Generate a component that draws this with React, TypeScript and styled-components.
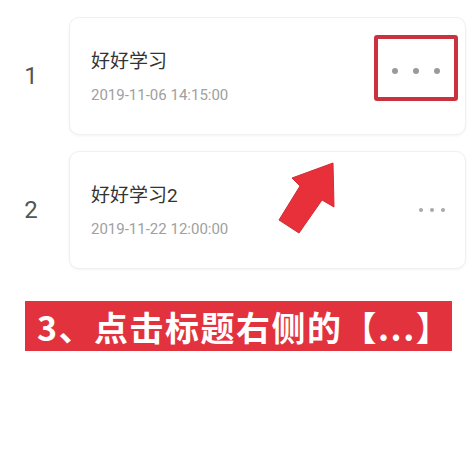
import styled, { createGlobalStyle } from 'styled-components';

const GlobalStyle = createGlobalStyle`
  html, body {
    margin: 0;
    padding: 0;
    background: #ffffff;
  }
  body {
    font-family: Roboto, "Noto Sans CJK SC", sans-serif;
  }
`;

type Note = {
  title: string;
  time: string;
};

const notes: Note[] = [
  { title: '好好学习', time: '2019-11-06 14:15:00' },
  { title: '好好学习2', time: '2019-11-22 12:00:00' },
];

function MoreMenu({ highlighted }: { highlighted: boolean }) {
  return (
    <MenuButton $highlighted={highlighted}>
      <Dot $big={highlighted} />
      <Dot $big={highlighted} />
      <Dot $big={highlighted} />
    </MenuButton>
  );
}

function ArrowPointer() {
  return (
    <ArrowWrapper>
      <svg width="75" height="85" viewBox="0 0 75 85">
        <path
          d="M63 8 L64 52 L52 45 L29 78 L9 65 L30 31 L22 23 Z"
          fill="#e8303b"
          stroke="#d42a34"
          strokeWidth="1"
          strokeLinejoin="round"
        />
      </svg>
    </ArrowWrapper>
  );
}

export default function App() {
  return (
    <Page>
      <GlobalStyle />
      <List>
        {notes.map((note, i) => (
          <Row key={note.time}>
            <Index>{i + 1}</Index>
            <Card>
              <CardText>
                <Title>{note.title}</Title>
                <Time>{note.time}</Time>
              </CardText>
              <MoreMenu highlighted={i === 0} />
            </Card>
          </Row>
        ))}
      </List>
      <Banner>
        <BannerText>3、点击标题右侧的【...】</BannerText>
      </Banner>
      <ArrowPointer />
    </Page>
  );
}

const Page = styled.div`
  position: relative;
  width: 474px;
  height: 468px;
  background: #ffffff;
  overflow: hidden;
`;

const List = styled.div`
  display: flex;
  flex-direction: column;
  gap: 16px;
  padding: 17px 8px 0 0;
`;

const Row = styled.div`
  display: grid;
  grid-template-columns: 62px 1fr;
  column-gap: 7px;
  align-items: center;
`;

const Index = styled.div`
  text-align: center;
  font-family: Roboto, "Liberation Sans", sans-serif;
  font-size: 24px;
  font-weight: 400;
  color: #555555;
`;

const Card = styled.div`
  display: flex;
  align-items: center;
  justify-content: space-between;
  height: 118px;
  box-sizing: border-box;
  padding: 0 0 0 21px;
  background: #ffffff;
  border: 1px solid #f0f0f0;
  border-radius: 10px;
  box-shadow: 0 1px 3px rgba(0, 0, 0, 0.05);
`;

const CardText = styled.div`
  align-self: flex-start;
  margin-top: 31px;
  display: flex;
  flex-direction: column;
  gap: 10px;
`;

const Title = styled.div`
  font-family: Roboto, "Noto Sans CJK SC", sans-serif;
  font-size: 19px;
  line-height: 26px;
  color: #333333;
`;

const Time = styled.div`
  font-family: Roboto, "Liberation Sans", sans-serif;
  font-size: 15px;
  line-height: 20px;
  color: #a0a0a0;
`;

const MenuButton = styled.div<{ $highlighted: boolean }>`
  display: flex;
  align-items: center;
  justify-content: center;
  box-sizing: border-box;
  ${({ $highlighted }) =>
    $highlighted
      ? `
    gap: 15px;
    width: 84px;
    height: 66px;
    margin: -16px 7px 0 0;
    padding-top: 6px;
    border: 4px solid #c9323f;
    border-radius: 3px;
  `
      : `
    gap: 7px;
    margin: 0 20px 0 0;
  `}
`;

const Dot = styled.span<{ $big: boolean }>`
  display: block;
  width: ${({ $big }) => ($big ? 6 : 4)}px;
  height: ${({ $big }) => ($big ? 6 : 4)}px;
  border-radius: 50%;
  background: ${({ $big }) => ($big ? '#9a9a9a' : '#a8a8a8')};
`;

const Banner = styled.div`
  margin: 32px 22px 0 25px;
  height: 50px;
  box-sizing: border-box;
  padding-left: 12px;
  display: flex;
  align-items: center;
  background: #e2323e;
`;

const BannerText = styled.span`
  color: #ffffff;
  font-family: "Noto Sans CJK SC", sans-serif;
  font-size: 34px;
  font-weight: 700;
  letter-spacing: 1.5px;
  white-space: nowrap;
`;

const ArrowWrapper = styled.div`
  position: absolute;
  left: 270px;
  top: 155px;
  width: 75px;
  height: 85px;

  svg {
    display: block;
  }
`;
